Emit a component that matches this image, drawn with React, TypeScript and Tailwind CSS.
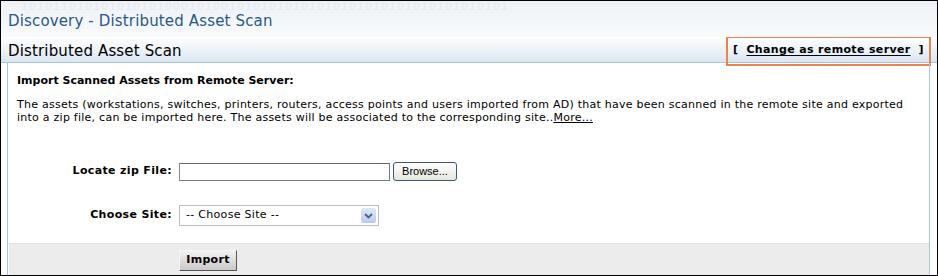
import React from 'react';

const font = { fontFamily: '"DejaVu Sans", Verdana, sans-serif' };

export default function App() {
  const bits = '1010110101010101010001010010101010101010101010101010101010101';

  return (
    <div
      className="w-[938px] h-[276px] border border-black bg-white overflow-hidden flex flex-col text-black"
      style={font}
    >
      {/* Page title bar */}
      <div className="relative h-[36px] shrink-0 bg-gradient-to-b from-[#eef2f6] to-[#f8fafc] overflow-hidden">
        <div
          aria-hidden="true"
          className="absolute left-[20px] top-0 text-[11px] leading-[12px] tracking-[1px] text-[#e3eaf1] whitespace-nowrap select-none"
        >
          {bits}
        </div>
        <div className="relative pl-[7px] pt-[11px] text-[15px] leading-[18px] tracking-[0.15px] text-[#2b5888]">
          Discovery - Distributed Asset Scan
        </div>
      </div>

      {/* Section header */}
      <div className="h-[26px] shrink-0 flex items-center justify-between pl-[7px] pr-[6px] bg-gradient-to-b from-white to-[#dbe6f1] border-b border-[#a9c4de]">
        <span className="text-[15px] leading-[18px] pt-[2px] tracking-[0.15px]">Distributed Asset Scan</span>
        <div className="h-[30px] w-[205px] mt-[2px] border-2 border-[#e8844c] flex items-center justify-center gap-[8px] text-[11px] font-bold tracking-[0.35px]">
          <span>[</span>
          <a className="underline underline-offset-2">Change as remote server</a>
          <span>]</span>
        </div>
      </div>

      {/* Content */}
      <div className="flex-1 ml-[6px] mr-[7px] border-x border-[#a9c4de] flex flex-col">
        <div className="px-[9px] pt-[11px]">
          <div className="text-[11px] font-bold leading-[14px]">Import Scanned Assets from Remote Server:</div>
          <p className="mt-[10px] text-[11px] leading-[13px] tracking-[0.25px]">
            The assets (workstations, switches, printers, routers, access points and users imported from AD) that have been scanned in the remote site and exported into a zip file, can be imported here. The assets will be associated to the corresponding site..<a className="underline">More...</a>
          </p>
        </div>

        <div className="mt-[38px] flex items-center">
          <label className="w-[164px] text-right text-[11px] font-bold tracking-[0.35px]">Locate zip File:</label>
          <input
            className="ml-[7px] w-[211px] h-[18px] border border-[#7a7a7a] border-t-[#666] border-l-[#888] bg-white"
            readOnly
          />
          <button
            className="ml-[3px] w-[64px] h-[19px] rounded-[3px] border border-[#3c5a78] bg-gradient-to-b from-white to-[#e6e6df] text-[11px] leading-none"
            style={{ fontFamily: '"Liberation Sans", Arial, sans-serif' }}
          >
            Browse...
          </button>
        </div>

        <div className="mt-[24px] flex items-center">
          <label className="w-[164px] text-right text-[11px] font-bold tracking-[0.35px]">Choose Site:</label>
          <div className="ml-[7px] w-[200px] h-[21px] border border-[#bdbdbd] bg-white flex items-center justify-between pl-[6px] pr-[2px]">
            <span className="text-[11px] tracking-[0.3px]">-- Choose Site --</span>
            <span className="w-[15px] h-[15px] rounded-[2px] bg-gradient-to-b from-[#dfe8f8] to-[#b7cbef] flex items-center justify-center">
              <svg width="9" height="6" viewBox="0 0 9 6">
                <path d="M1 1 L4.5 4.5 L8 1" stroke="#4d6185" strokeWidth="1.8" fill="none" />
              </svg>
            </span>
          </div>
        </div>

        <div className="mt-[17px] flex-1 bg-[#ececec] border-t border-[#e2e2e2] ml-[1px] flex items-start pt-[6px]">
          <button className="ml-[170px] w-[58px] h-[21px] text-[11px] font-bold tracking-[0.3px] border border-t-[#f4f4f4] border-l-[#f4f4f4] border-r-[#555] border-b-[#555] bg-gradient-to-b from-[#f2f2f2] to-[#c9c9c9]">
            Import
          </button>
        </div>
      </div>
    </div>
  );
}
